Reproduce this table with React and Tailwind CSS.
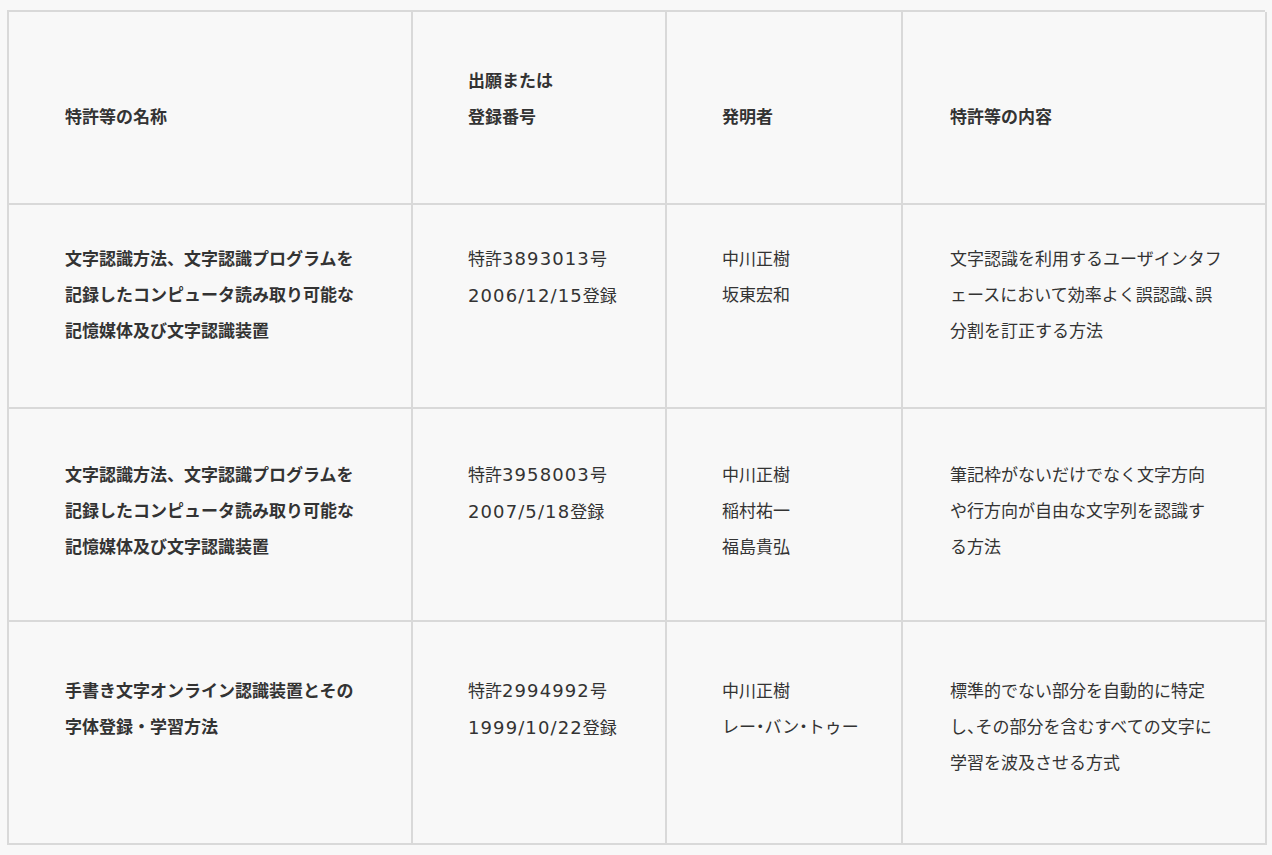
import React from 'react';

const rows = [
  {
    name: ['文字認識方法、文字認識プログラムを', '記録したコンピュータ読み取り可能な', '記憶媒体及び文字認識装置'],
    number: ['特許3893013号', '2006/12/15登録'],
    inventors: ['中川正樹', '坂東宏和'],
    content: ['文字認識を利用するユーザインタフ', 'ェースにおいて効率よく誤認識、誤', '分割を訂正する方法'],
    pad: 'pt-[35px]',
  },
  {
    name: ['文字認識方法、文字認識プログラムを', '記録したコンピュータ読み取り可能な', '記憶媒体及び文字認識装置'],
    number: ['特許3958003号', '2007/5/18登録'],
    inventors: ['中川正樹', '稲村祐一', '福島貴弘'],
    content: ['筆記枠がないだけでなく文字方向', 'や行方向が自由な文字列を認識す', 'る方法'],
    pad: 'pt-[47px]',
  },
  {
    name: ['手書き文字オンライン認識装置とその', '字体登録・学習方法'],
    number: ['特許2994992号', '1999/10/22登録'],
    inventors: ['中川正樹', 'レー・バン・トゥー'],
    content: ['標準的でない部分を自動的に特定', 'し、その部分を含むすべての文字に', '学習を波及させる方式'],
    pad: 'pt-[50px]',
  },
];

// half-width punctuation and wide digits, like the original font
const fmt = (text) =>
  text.split(/([、・]|[0-9/]+)/).filter(Boolean).map((part, i) => {
    if (part === '、' || part === '・')
      return <span key={i} className="[font-feature-settings:'halt']">{part}</span>;
    if (/^[0-9/]+$/.test(part))
      return <span key={i} className="font-['DejaVu_Sans',sans-serif] text-[18px] tracking-[1.1px]">{part}</span>;
    return part;
  });

const Lines = ({ lines, plain }) =>
  lines.map((l, i) => <div key={i}>{plain ? l : fmt(l)}</div>);

export default function App() {
  const cell = 'border-r-2 border-b-2 border-[#d9d9d9]';
  const head = `${cell} flex flex-col justify-end pb-[69px] font-bold`;
  return (
    <div className="min-h-[855px] bg-[#f8f8f8] pt-[10px] pl-[7px] text-[#333] text-[17px] leading-[36px] font-['Noto_Sans_CJK_JP','Noto_Sans',sans-serif]">
      <div className="grid w-[1258px] grid-cols-[404px_254px_236px_364px] grid-rows-[193px_204px_213px_223px] border-l-2 border-t-2 border-[#d9d9d9]">
        {/* header */}
        <div className={`${head} pl-[56px]`}>特許等の名称</div>
        <div className={`${head} pl-[55px]`}>
          <div>出願または</div>
          <div>登録番号</div>
        </div>
        <div className={`${head} pl-[55px]`}>発明者</div>
        <div className={`${head} pl-[47px]`}>特許等の内容</div>

        {rows.map((r, i) => (
          <React.Fragment key={i}>
            <div className={`${cell} ${r.pad} pl-[56px] font-bold`}><Lines lines={r.name} plain /></div>
            <div className={`${cell} ${r.pad} pl-[55px]`}><Lines lines={r.number} /></div>
            <div className={`${cell} ${r.pad} pl-[55px]`}><Lines lines={r.inventors} /></div>
            <div className={`${cell} ${r.pad} pl-[47px]`}><Lines lines={r.content} /></div>
          </React.Fragment>
        ))}
      </div>
    </div>
  );
}
